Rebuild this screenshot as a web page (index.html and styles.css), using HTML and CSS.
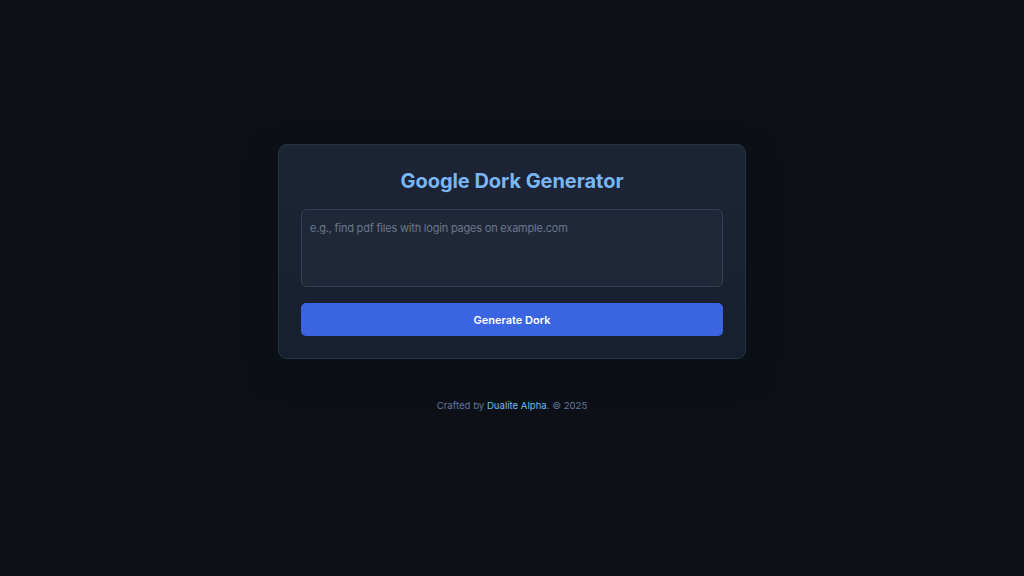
FILE: index.html
```html
<!DOCTYPE html>
<html lang="en">
<head>
<meta charset="utf-8">
<title>Google Dork Generator</title>
<link rel="stylesheet" href="styles.css">
</head>
<body>
<main class="page">
  <section class="card">
    <h1 class="title">Google Dork Generator</h1>
    <textarea class="query" placeholder="e.g., find pdf files with login pages on example.com"></textarea>
    <button class="generate" type="button">Generate Dork</button>
  </section>
  <footer class="footer">Crafted by <a class="brand" href="#">Dualite Alpha</a>. © 2025</footer>
</main>
</body>
</html>
```
FILE: styles.css
```css
* { box-sizing: border-box; }
html, body { margin: 0; height: 100%; }
body {
  background: #0d1117;
  font-family: Inter, "Noto Sans", "Liberation Sans", sans-serif;
  color: #e5e7eb;
}
.page {
  display: flex;
  flex-direction: column;
  align-items: center;
  padding-top: 144px;
}
.card {
  width: 468px;
  padding: 22px 22px 22px;
  border: 1px solid #273246;
  border-radius: 9px;
  background: linear-gradient(180deg, #1c2436 0%, #181f2f 100%);
  box-shadow: 0 12px 30px rgba(10, 14, 24, 0.6);
  display: flex;
  flex-direction: column;
}
.title {
  margin: 0 0 14px;
  text-align: center;
  font-size: 20px;
  line-height: 28px;
  font-weight: 700;
  letter-spacing: -0.05px;
  color: #78b7f2;
}
.query {
  display: block;
  width: 100%;
  height: 78px;
  resize: none;
  padding: 11px 8px;
  border: 1px solid #354056;
  border-radius: 6px;
  background: #1f2839;
  color: #e5e7eb;
  font-family: inherit;
  font-size: 11px;
  line-height: 14px;
  letter-spacing: -0.2px;
  outline: none;
}
.query::placeholder { color: #6b778a; }
.generate {
  margin-top: 16px;
  height: 33px;
  width: 100%;
  border: 0;
  border-radius: 5px;
  background: #3b64e2;
  color: #ffffff;
  font-family: inherit;
  font-size: 11px;
  font-weight: 600;
}
.footer {
  margin-top: 40px;
  font-size: 9.6px;
  line-height: 14px;
  color: #62789a;
}
.brand {
  color: #78b7f2;
  text-decoration: none;
}
```
